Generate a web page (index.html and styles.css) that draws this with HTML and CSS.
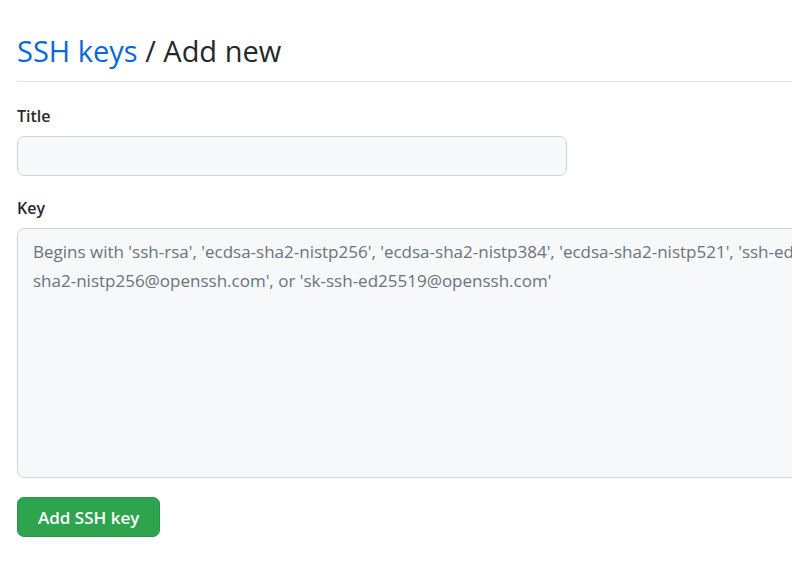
FILE: index.html
```html
<html lang="en">
<head>
<title>Add new SSH key</title>
<meta name="viewport" content="width=device-width, initial-scale=1">
<link rel="stylesheet" href="styles.css">
</head>
<body>

<div class="page">
  <div class="subhead">
    <h2 class="subhead-heading"><a href="#">SSH keys</a> / Add new</h2>
  </div>

  <form class="key-form">
    <dl class="form-group">
      <dt><label for="key_title">Title</label></dt>
      <dd><input type="text" id="key_title" class="form-control title-input"></dd>
    </dl>

    <dl class="form-group">
      <dt><label for="key_key">Key</label></dt>
      <dd><textarea id="key_key" class="form-control key-input" placeholder="Begins with 'ssh-rsa', 'ecdsa-sha2-nistp256', 'ecdsa-sha2-nistp384', 'ecdsa-sha2-nistp521', 'ssh-ed25519', 'sk-ecdsa-sha2-nistp256@openssh.com', or 'sk-ssh-ed25519@openssh.com'"></textarea></dd>
    </dl>

    <p><button type="button" class="btn-primary">Add SSH key</button></p>
  </form>
</div>

</body>
</html>
```

FILE: styles.css
```css
html, body {
  margin: 0;
  overflow: hidden;
}

body {
  font-family: "Open Sans", "Noto Sans", Arial, sans-serif;
  color: #24292e;
  background: #fff;
}

.page {
  width: 1100px;
  padding: 0 0 0 17px;
}

.subhead {
  border-bottom: 1px solid #e1e4e8;
  padding-top: 30px;
  padding-bottom: 9px;
}

.subhead-heading {
  margin: 0;
  font-size: 29px;
  font-weight: 400;
  line-height: 42px;
}

.subhead-heading a {
  color: #0969da;
  text-decoration: none;
}

.key-form {
  margin: 0;
  padding-top: 24px;
}

.form-group {
  margin: 0 0 19px 0;
}

.form-group:first-child {
  margin-bottom: 22px;
}

.form-group dt {
  margin: 0 0 9px 0;
  font-size: 16px;
  font-weight: 600;
  line-height: 21px;
}

.form-group dd {
  margin: 0;
}

.form-control {
  box-sizing: border-box;
  display: block;
  background: #f6f8fa;
  border: 1px solid #d1d5da;
  border-radius: 7px;
  font-family: inherit;
  color: #24292e;
  outline: none;
}

.title-input {
  width: 550px;
  height: 40px;
  padding: 6px 15px;
  font-size: 16px;
}

.key-input {
  width: 960px;
  height: 250px;
  padding: 8px 15px;
  font-size: 17px;
  line-height: 29px;
  resize: none;
}

.key-input::placeholder {
  color: #6a737d;
}

.key-form p {
  margin: 0;
}

.btn-primary {
  height: 40px;
  padding: 0 20px;
  background: #2ea44f;
  border: 1px solid #2a9447;
  border-radius: 7px;
  color: #fff;
  font-family: inherit;
  font-size: 17px;
  font-weight: 600;
  cursor: pointer;
}
```
